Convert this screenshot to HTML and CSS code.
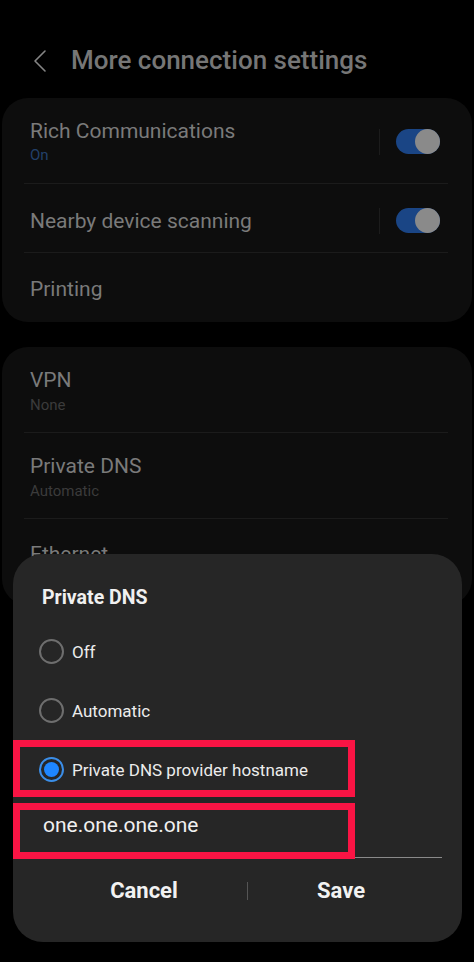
FILE: index.html
```html
<!DOCTYPE html>
<html lang="en">
<head>
    <meta charset="UTF-8">
    <meta name="viewport" content="width=device-width, initial-scale=1.0">
    <title>More connection settings</title>
    <link rel="stylesheet" href="styles.css">
</head>
<body>
    <header class="app-bar">
        <svg class="back" width="14" height="24" viewBox="0 0 14 24">
            <path d="M12 2 L2 12 L12 22" fill="none" stroke="currentColor" stroke-width="1.6" stroke-linecap="round" stroke-linejoin="round"/>
        </svg>
        <h1>More connection settings</h1>
    </header>

    <section class="card">
        <div class="row tall">
            <div class="row-text">
                <div class="row-title">Rich Communications</div>
                <div class="row-sub on">On</div>
            </div>
            <span class="vdiv"></span>
            <span class="switch"><span class="knob"></span></span>
        </div>
        <div class="row">
            <div class="row-text">
                <div class="row-title">Nearby device scanning</div>
            </div>
            <span class="vdiv"></span>
            <span class="switch"><span class="knob"></span></span>
        </div>
        <div class="row last">
            <div class="row-text">
                <div class="row-title">Printing</div>
            </div>
        </div>
    </section>

    <section class="card second">
        <div class="row tall">
            <div class="row-text">
                <div class="row-title">VPN</div>
                <div class="row-sub">None</div>
            </div>
        </div>
        <div class="row tall">
            <div class="row-text">
                <div class="row-title">Private DNS</div>
                <div class="row-sub">Automatic</div>
            </div>
        </div>
        <div class="row last eth">
            <div class="row-text">
                <div class="row-title">Ethernet</div>
            </div>
        </div>
    </section>

    <div class="dialog">
        <h2>Private DNS</h2>
        <div class="options">
            <label class="option"><span class="radio"></span>Off</label>
            <label class="option"><span class="radio"></span>Automatic</label>
            <label class="option"><span class="radio checked"></span>Private DNS provider hostname</label>
        </div>
        <div class="field">one.one.one.one</div>
        <div class="actions">
            <button class="btn">Cancel</button>
            <span class="btn-div"></span>
            <button class="btn">Save</button>
        </div>
    </div>

    <div class="mark mark-option"></div>
    <div class="mark mark-field"></div>
</body>
</html>
```

FILE: styles.css
```css
:root {
    --page-bg: #000;
    --card-bg: #0d0d0d;
    --dim-text: #7a7a7a;
    --dim-sub: #3b3b3b;
    --line: #1b1b1b;
    --dialog-bg: #262626;
    --dialog-text: #f0f0f0;
    --accent: #1e86ff;
    --mark: #fa1444;
}
* {
    box-sizing: border-box;
}
body {
    margin: 0;
    width: 474px;
    height: 962px;
    background: var(--page-bg);
    font-family: Roboto, 'Noto Sans', sans-serif;
    position: relative;
    overflow: hidden;
}
.app-bar {
    height: 98px;
    padding: 46px 0 0 33px;
    display: flex;
    align-items: flex-start;
}
.back {
    color: #858585;
    margin-top: 3px;
    margin-right: 24px;
}
.app-bar h1 {
    margin: 0;
    font-size: 26px;
    line-height: 28px;
    font-weight: 500;
    color: #767676;
}
.card {
    margin: 0 2px;
    background: var(--card-bg);
    border-radius: 26px;
    padding: 0 26px 0 28px;
}
.card.second {
    margin-top: 25px;
    height: 258px;
    overflow: hidden;
}
.row {
    display: flex;
    align-items: center;
    height: 69px;
    padding: 25px 0 20px 6px;
    border-bottom: 1px solid var(--line);
    margin: 0 -2px 0 -6px;
}
.row.tall {
    height: 86px;
    padding-top: 21px;
    padding-bottom: 19px;
}
.row.last {
    border-bottom: none;
    padding-top: 24px;
    padding-bottom: 21px;
}
.row.eth {
    padding-top: 23px;
}
.row-text {
    flex: 1;
    align-self: flex-start;
}
.row-title {
    font-size: 21px;
    line-height: 24px;
    color: var(--dim-text);
}
.row-sub {
    margin-top: 3px;
    font-size: 15px;
    line-height: 20px;
    color: var(--dim-sub);
}
.row-sub.on {
    margin-top: 2px;
    color: #22406a;
}
.vdiv {
    width: 1px;
    height: 26px;
    background: #1c1c1c;
    margin-right: 16px;
}
.switch {
    position: relative;
    width: 44px;
    height: 25px;
    border-radius: 13px;
    background: #1a4585;
    margin-right: 8px;
}
.knob {
    position: absolute;
    right: 0;
    top: 0;
    width: 25px;
    height: 25px;
    border-radius: 50%;
    background: #8a8a8a;
}
.dialog {
    position: absolute;
    left: 13px;
    top: 554px;
    width: 449px;
    height: 388px;
    background: var(--dialog-bg);
    border-radius: 30px;
    padding: 32px 20px 0 29px;
    color: var(--dialog-text);
}
.dialog h2 {
    margin: 0;
    font-size: 19.5px;
    line-height: 24px;
    font-weight: 700;
}
.options {
    margin-top: 12px;
}
.option {
    display: flex;
    align-items: center;
    height: 59px;
    font-size: 17px;
    color: #ececec;
}
.radio {
    width: 25px;
    height: 25px;
    border-radius: 50%;
    border: 2px solid #6e6e6e;
    margin: 0 8px 0 -3px;
    display: flex;
    align-items: center;
    justify-content: center;
}
.radio.checked {
    border-color: #3b8ee8;
}
.radio.checked::after {
    content: "";
    width: 15px;
    height: 15px;
    border-radius: 50%;
    background: var(--accent);
}
.field {
    padding: 13px 0 19px 1px;
    font-size: 21px;
    line-height: 26px;
    border-bottom: 1.5px solid #8a8a8a;
}
.actions {
    display: grid;
    grid-template-columns: 206px 1px 186px;
    align-items: center;
    margin: 20px 0 0 -1px;
}
.btn {
    background: none;
    border: none;
    padding: 0;
    font-family: inherit;
    font-size: 22px;
    line-height: 26px;
    font-weight: 700;
    color: #f2f2f2;
}
.btn-div {
    height: 18px;
    background: #555;
}
.mark {
    position: absolute;
    left: 13px;
    width: 342px;
    border: 7px solid var(--mark);
}
.mark-option {
    top: 740px;
    height: 57px;
}
.mark-field {
    top: 803px;
    height: 56px;
}
```
